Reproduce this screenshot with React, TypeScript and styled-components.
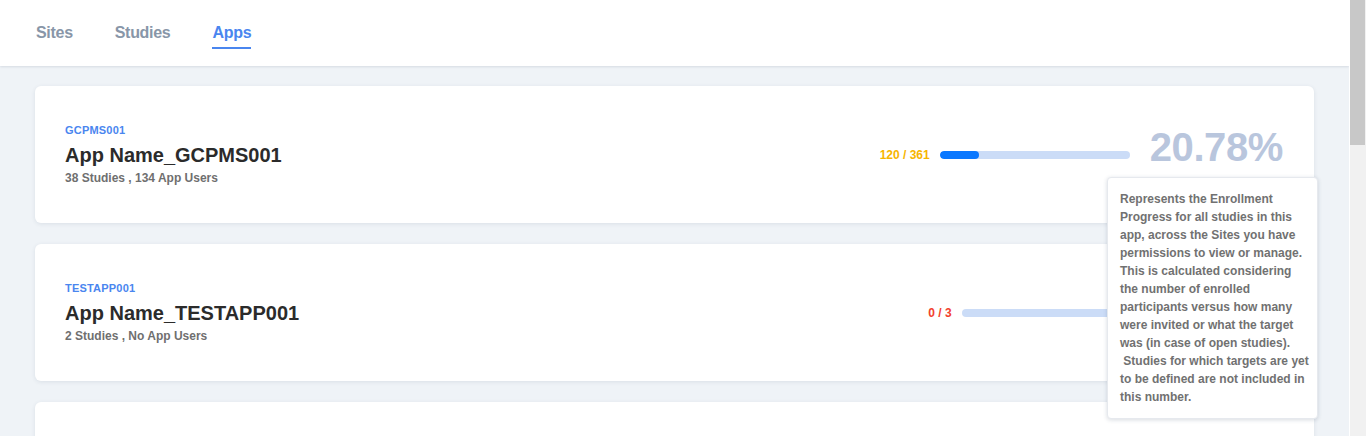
import React from "react";
import styled, { createGlobalStyle } from "styled-components";

const GlobalStyle = createGlobalStyle`
  html, body { margin: 0; padding: 0; overflow: hidden; }
  body {
    background: #eff3f7;
    font-family: "Liberation Sans", Arial, sans-serif;
  }
  * { box-sizing: border-box; }
`;

const Shell = styled.div`
  height: 100vh;
  display: flex;
`;

const Viewport = styled.div`
  flex: 1;
  min-width: 0;
  overflow: hidden;
  background: #eff3f7;
`;

const ScrollTrack = styled.div`
  width: 17px;
  flex: none;
  background: #f1f1f1;
  border-left: 1px solid #ffffff;
  padding-right: 1px;
`;

const ScrollThumb = styled.div`
  height: 145px;
  background: #c8c8c8;
`;

const Header = styled.header`
  height: 66px;
  background: #ffffff;
  box-shadow: 0 1px 2px rgba(40, 60, 90, 0.12);
  display: flex;
  align-items: stretch;
  padding-left: 36px;
  gap: 42px;
  position: relative;
  z-index: 1;
`;

const Tab = styled.div<{ $active?: boolean }>`
  display: flex;
  align-items: center;
  font-size: 16px;
  font-weight: 700;
  letter-spacing: -0.3px;
  color: ${(p) => (p.$active ? "#4a86ef" : "#8896a8")};
  padding-bottom: 1px;
  & > span {
    position: relative;
  }
  & > span::after {
    content: "";
    display: ${(p) => (p.$active ? "block" : "none")};
    position: absolute;
    left: 0;
    right: 0;
    bottom: -7px;
    height: 2px;
    background: #4a86ef;
  }
`;

const List = styled.main`
  padding: 20px 35px 20px 35px;
  display: flex;
  flex-direction: column;
  gap: 21px;
`;

const Card = styled.section`
  height: 137px;
  flex: none;
  background: #ffffff;
  border-radius: 6px;
  box-shadow: 0 1px 4px rgba(40, 60, 90, 0.1);
  display: flex;
  align-items: center;
  justify-content: space-between;
  padding: 0 31px 0 30px;
`;

const Info = styled.div`
  display: flex;
  flex-direction: column;
`;

const Code = styled.div`
  font-size: 11px;
  font-weight: 700;
  color: #4a86ef;
  letter-spacing: 0.2px;
  line-height: 13px;
  margin-bottom: 6px;
`;

const Name = styled.div`
  font-size: 20px;
  font-weight: 700;
  color: #2b2b2b;
  line-height: 24px;
`;

const Sub = styled.div`
  font-size: 12px;
  font-weight: 700;
  color: #6f6f6f;
  line-height: 15px;
  margin-top: 4px;
`;

const Progress = styled.div`
  display: flex;
  align-items: center;
`;

const Count = styled.div<{ $color: string }>`
  font-size: 12px;
  font-weight: 700;
  color: ${(p) => p.$color};
  margin-right: 10px;
  margin-top: 1px;
`;

const Track = styled.div`
  width: 190px;
  height: 8px;
  border-radius: 4px;
  background: #cbdcf7;
  overflow: hidden;
  margin-right: 20px;
`;

const Fill = styled.div`
  height: 100%;
  border-radius: 4px;
  background: #0a78ff;
`;

const Percent = styled.div`
  position: relative;
  font-size: 40px;
  font-weight: 700;
  letter-spacing: -0.4px;
  color: #b9c6dd;
  line-height: 46px;
  margin-bottom: 16px;
`;

const Tooltip = styled.div`
  position: absolute;
  top: 53px;
  right: -35px;
  width: 211px;
  padding: 12px 12px;
  background: #ffffff;
  border: 1px solid #e6e9ee;
  border-radius: 4px;
  box-shadow: 0 1px 4px rgba(40, 60, 90, 0.18);
  font-size: 12px;
  font-weight: 700;
  letter-spacing: 0;
  line-height: 18px;
  color: #717171;
  white-space: nowrap;
  z-index: 5;
`;

type AppItem = {
  code: string;
  name: string;
  sub: string;
  done: number;
  total: number;
  pct: number;
  countColor: string;
  tooltip?: boolean;
};

const apps: AppItem[] = [
  { code: "GCPMS001", name: "App Name_GCPMS001", sub: "38 Studies , 134 App Users", done: 120, total: 361, pct: 20.78, countColor: "#f7b500", tooltip: true },
  { code: "TESTAPP001", name: "App Name_TESTAPP001", sub: "2 Studies , No App Users", done: 0, total: 3, pct: 0, countColor: "#f2412d" },
  { code: "DEMOAPP002", name: "App Name_DEMOAPP002", sub: "5 Studies , 12 App Users", done: 8, total: 40, pct: 20, countColor: "#f7b500" },
  { code: "PILOT003", name: "App Name_PILOT003", sub: "3 Studies , 4 App Users", done: 2, total: 10, pct: 20, countColor: "#f7b500" },
];

const tooltipLines = [
  "Represents the Enrollment",
  "Progress for all studies in this",
  "app, across the Sites you have",
  "permissions to view or manage.",
  "This is calculated considering",
  "the number of enrolled",
  "participants versus how many",
  "were invited or what the target",
  "was (in case of open studies).",
  "\u00a0Studies for which targets are yet",
  "to be defined are not included in",
  "this number.",
];

export default function AppPage() {
  return (
    <>
      <GlobalStyle />
      <Shell>
        <Viewport>
          <Header>
            <Tab><span>Sites</span></Tab>
            <Tab><span>Studies</span></Tab>
            <Tab $active><span>Apps</span></Tab>
          </Header>
          <List>
            {apps.map((a) => (
              <Card key={a.code}>
                <Info>
                  <Code>{a.code}</Code>
                  <Name>{a.name}</Name>
                  <Sub>{a.sub}</Sub>
                </Info>
                <Progress>
                  <Count $color={a.countColor}>{a.done} / {a.total}</Count>
                  <Track>
                    <Fill style={{ width: `${a.pct}%` }} />
                  </Track>
                  <Percent>
                    {a.pct.toFixed(2)}%
                    {a.tooltip && (
                      <Tooltip>
                        {tooltipLines.map((l) => (
                          <div key={l}>{l}</div>
                        ))}
                      </Tooltip>
                    )}
                  </Percent>
                </Progress>
              </Card>
            ))}
          </List>
        </Viewport>
        <ScrollTrack>
          <ScrollThumb />
        </ScrollTrack>
      </Shell>
    </>
  );
}
